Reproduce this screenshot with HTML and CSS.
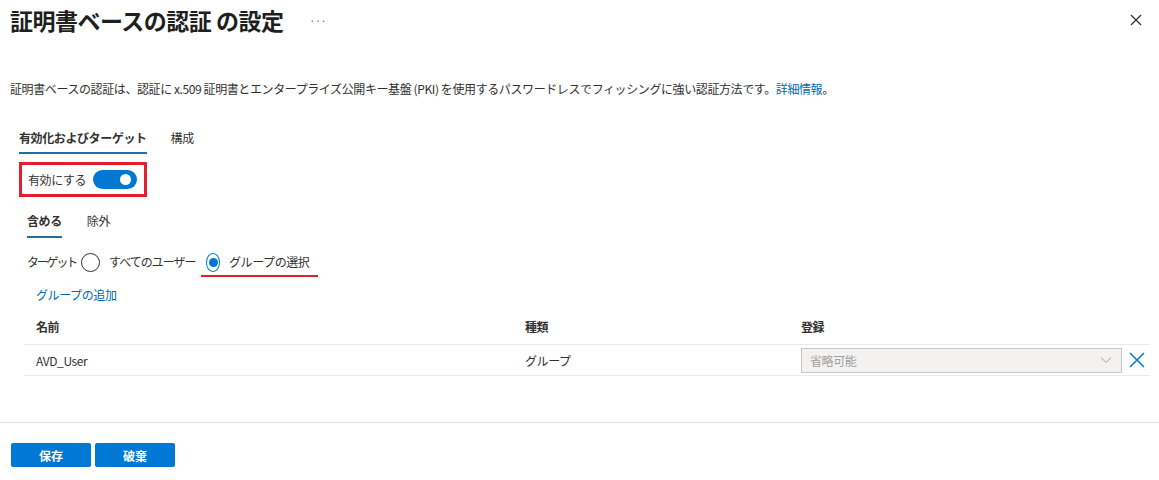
FILE: index.html
```html
<!DOCTYPE html>
<html lang="ja">
<head>
    <meta charset="UTF-8">
    <meta name="viewport" content="width=device-width, initial-scale=1.0">
    <title>証明書ベースの認証 の設定</title>
    <link rel="stylesheet" href="styles.css">
</head>
<body>
<div class="panel">
    <header class="header">
        <h1 class="title">証明書ベースの認証 の設定</h1>
        <span class="more">···</span>
        <button class="close" aria-label="閉じる">
            <svg width="12" height="12" viewBox="0 0 12 12"><path d="M1 1L11 11M11 1L1 11" stroke="#323130" stroke-width="1.2" fill="none"/></svg>
        </button>
    </header>

    <p class="desc">証明書ベースの認証は、認証に x.509 証明書とエンタープライズ公開キー基盤 (PKI) を使用するパスワードレスでフィッシングに強い認証方法です。<a class="link" href="#">詳細情報</a>。</p>

    <nav class="tabs">
        <span class="tab active">有効化およびターゲット</span>
        <span class="tab">構成</span>
    </nav>

    <div class="enable">
        <span>有効にする</span>
        <span class="toggle"><span class="knob"></span></span>
    </div>

    <nav class="subtabs">
        <span class="tab active">含める</span>
        <span class="tab">除外</span>
    </nav>

    <div class="target">
        <span class="target-label">ターゲット</span>
        <label class="radio narrow"><span class="circle"></span>すべてのユーザー</label>
        <span class="mark">
            <label class="radio"><span class="circle checked"></span>グループの選択</label>
        </span>
    </div>

    <a class="link add" href="#">グループの追加</a>

    <div class="table">
        <div class="row head">
            <div class="cell c-name">名前</div>
            <div class="cell c-type">種類</div>
            <div class="cell c-reg">登録</div>
        </div>
        <div class="row">
            <div class="cell c-name">AVD_User</div>
            <div class="cell c-type">グループ</div>
            <div class="cell c-reg">
                <div class="select">
                    <span>省略可能</span>
                    <svg width="12" height="8" viewBox="0 0 12 8"><path d="M1 1.5L6 6.5L11 1.5" stroke="#a19f9d" fill="none"/></svg>
                </div>
                <svg class="remove" width="18" height="18" viewBox="0 0 18 18"><path d="M2 2L16 16M16 2L2 16" stroke="#0078d4" stroke-width="1.5" fill="none"/></svg>
            </div>
        </div>
    </div>

    <footer class="footer">
        <button class="btn">保存</button>
        <button class="btn">破棄</button>
    </footer>
</div>
</body>
</html>
```

FILE: styles.css
```css
*, *::before, *::after{
    box-sizing: border-box;
    padding: 0;
    margin: 0;
}

body{
    font-family: "Noto Sans CJK JP", "Segoe UI", "Liberation Sans", sans-serif;
    font-size: 12px;
    letter-spacing: -0.4px;
    color: #323130;
    background-color: #FFF;
    white-space: nowrap;
}

.panel{
    width: 1159px;
    height: 480px;
}

.header{
    height: 40px;
    display: flex;
    align-items: center;
    padding: 0 15px 0 10px;
}

.title{
    font-size: 23px;
    font-weight: bold;
    line-height: 30px;
    color: #201f1e;
    letter-spacing: -0.5px;
}

.more{
    margin-left: 26px;
    font-size: 10px;
    color: #605e5c;
    letter-spacing: 0;
}

.close{
    margin-left: auto;
    background: none;
    border: none;
    width: 16px;
    height: 16px;
    display: grid;
    place-content: center;
}

.desc{
    margin-top: 40px;
    padding-left: 10px;
    line-height: 18px;
}

.link{
    color: #0068b8;
    text-decoration: none;
}

.tabs{
    margin-top: 30px;
    padding-left: 19px;
    display: flex;
    gap: 24px;
}

.tab{
    line-height: 20px;
    padding-bottom: 4px;
    border-bottom: 2px solid transparent;
}

.tab.active{
    font-weight: bold;
    border-bottom-color: #1d6fa5;
}

.enable{
    margin: 8px 0 0 19px;
    width: 128px;
    height: 35px;
    border: 3px solid #e0202f;
    display: flex;
    align-items: center;
    gap: 7px;
    padding-left: 6px;
}

.toggle{
    width: 44px;
    height: 19px;
    border-radius: 10px;
    background-color: #0078d4;
    display: flex;
    align-items: center;
    justify-content: flex-end;
    padding-right: 6px;
}

.knob{
    width: 11px;
    height: 11px;
    border-radius: 50%;
    background-color: #FFF;
}

.subtabs{
    margin-top: 14px;
    padding-left: 27px;
    display: flex;
    gap: 25px;
}

.subtabs .tab{
    padding-bottom: 5px;
}

.target{
    margin-top: 12px;
    padding-left: 27px;
    display: flex;
    align-items: flex-start;
    height: 29px;
}

.target-label{
    line-height: 24px;
    margin-right: 5px;
    letter-spacing: -2.2px;
}

.radio{
    display: flex;
    align-items: center;
    gap: 9px;
    line-height: 24px;
    margin-right: 9px;
}

.radio.narrow{
    letter-spacing: -1px;
    margin-right: 6px;
}

.circle{
    width: 19px;
    height: 19px;
    border: 1px solid #323130;
    border-radius: 50%;
    display: grid;
    place-content: center;
}

.circle.checked{
    border-color: #0078d4;
}

.circle.checked::after{
    content: '';
    width: 9px;
    height: 9px;
    border-radius: 50%;
    background-color: #0078d4;
}

.mark{
    padding: 0 0 1px 5px;
    border-bottom: 2px solid #e0202f;
    width: 117px;
}

.add{
    display: block;
    margin: 6px 0 0 36px;
    line-height: 20px;
}

.table{
    margin: 4px 0 0 24px;
    width: 1126px;
}

.row{
    display: flex;
    align-items: center;
    border-bottom: 1px solid #edebe9;
    height: 31px;
}

.row.head{
    height: 36px;
    font-weight: bold;
}

.cell{
    padding-left: 12px;
}

.c-name{
    width: 489px;
}

.c-type{
    width: 276px;
}

.c-reg{
    flex: 1;
    display: flex;
    align-items: center;
    gap: 6px;
}

.select{
    width: 321px;
    height: 25px;
    background-color: #f3f2f1;
    border: 1px solid #c8c6c4;
    display: flex;
    align-items: center;
    justify-content: space-between;
    padding: 0 9px 0 8px;
    color: #a19f9d;
}

.footer{
    margin-top: 46px;
    border-top: 1px solid #e1dfdd;
    padding: 20px 0 0 11px;
    display: flex;
    gap: 4px;
}

.btn{
    width: 80px;
    height: 24px;
    border: none;
    border-radius: 2px;
    background-color: #0078d4;
    color: #FFF;
    font-family: inherit;
    font-size: 12px;
    font-weight: bold;
}
```
